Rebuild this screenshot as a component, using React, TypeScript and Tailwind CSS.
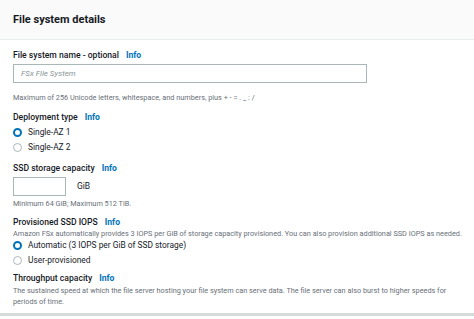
export default function App() {
  const font = { fontFamily: 'Roboto, "Open Sans", "Liberation Sans", sans-serif' };

  const Label = ({ text }: { text: string }) => (
    <div className="flex h-[14px] items-center gap-[7px] text-[8.6px] font-medium text-[#16191f]">
      <span>{text}</span>
      <span className="font-bold text-[#0073bb]">Info</span>
    </div>
  );

  const Radio = ({ checked, label }: { checked: boolean; label: string }) => (
    <label className="flex h-[15px] items-center gap-[6px] text-[8.4px] text-[#16191f]">
      {checked ? (
        <span className="h-[9px] w-[9px] rounded-full border-[2.5px] border-[#0073bb] bg-white" />
      ) : (
        <span className="h-[9px] w-[9px] rounded-full border border-[#aab7b8] bg-white" />
      )}
      <span>{label}</span>
    </label>
  );

  return (
    <div className="h-[319px] w-[474px] overflow-hidden bg-white" style={font}>
      <div className="h-[316px] border-b-[3px] border-[#d5dbdb] bg-white">
        {/* шапка */}
        <div className="flex h-[40px] items-center border-b border-[#eaeded] bg-[#fafafa] px-[13px] pt-[1px]">
          <h2 className="text-[11px] font-bold text-[#16191f]">File system details</h2>
        </div>

        <div className="px-[13px] pt-[8px]">
          <Label text="File system name - optional" />
          <div className="mt-[2px] flex h-[19px] w-[354px] items-center border border-[#aab7b8] px-[7px] text-[8px] italic text-[#879596]">
            FSx File System
          </div>
          <p className="mt-[10px] text-[7.3px] leading-[10px] text-[#687078]">
            Maximum of 256 Unicode letters, whitespace, and numbers, plus + - = . _ : /
          </p>

          <div className="mt-[7px]">
            <Label text="Deployment type" />
            <div className="mt-[1px] flex flex-col">
              <Radio checked label="Single-AZ 1" />
              <Radio checked={false} label="Single-AZ 2" />
            </div>
          </div>

          <div className="mt-[6px]">
            <Label text="SSD storage capacity" />
            <div className="mt-[2px] flex items-center">
              <div className="h-[19px] w-[53px] border border-[#aab7b8]" />
              <span className="ml-[11px] text-[8.5px] text-[#16191f]">GiB</span>
            </div>
            <p className="mt-[3px] text-[7.3px] leading-[10px] text-[#687078]">Minimum 64 GiB; Maximum 512 TiB.</p>
          </div>

          <div className="mt-[6px]">
            <Label text="Provisioned SSD IOPS" />
            <p className="whitespace-nowrap text-[7.3px] leading-[10px] text-[#687078]">
              Amazon FSx automatically provides 3 IOPS per GiB of storage capacity provisioned. You can also provision additional SSD IOPS as needed.
            </p>
            <div className="-mt-[1px] flex flex-col">
              <Radio checked label="Automatic (3 IOPS per GiB of SSD storage)" />
              <Radio checked={false} label="User-provisioned" />
            </div>
          </div>

          <div className="mt-[3px]">
            <Label text="Throughput capacity" />
            <p className="w-[445px] text-[7.3px] leading-[11px] text-[#687078]">
              The sustained speed at which the file server hosting your file system can serve data. The file server can also burst to higher speeds for periods of time.
            </p>
          </div>
        </div>
      </div>
    </div>
  );
}
